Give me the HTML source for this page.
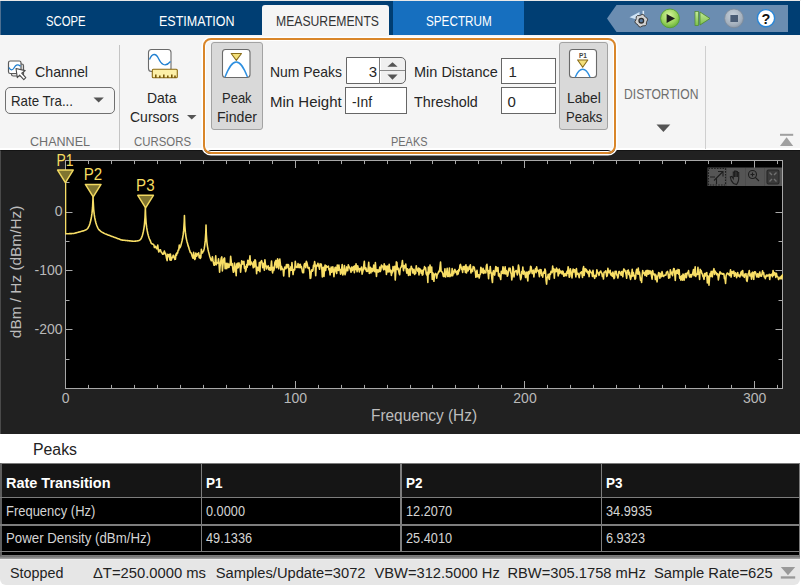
<!DOCTYPE html>
<html><head><meta charset="utf-8">
<style>
html,body{margin:0;padding:0;width:801px;height:585px;overflow:hidden;background:#ffffff;}
body{position:relative;font-family:"Liberation Sans", sans-serif;}
.a{position:absolute;box-sizing:border-box;}
.t{position:absolute;line-height:1;white-space:nowrap;transform-origin:0 0;}
svg{position:absolute;overflow:visible;}
</style></head><body>
<!-- top line -->
<div class="a" style="left:0;top:0;width:801px;height:1px;background:#e8e8e8"></div>
<!-- tab bar -->
<div class="a" style="left:0;top:1px;width:800px;height:34.7px;background:#003e73"></div>
<div class="a" style="left:0;top:1px;width:1px;height:34px;background:#4d6f91"></div>
<div class="a" style="left:262px;top:5px;width:127px;height:31px;background:#f5f5f5;border-radius:3px 3px 0 0"></div>
<div class="a" style="left:393px;top:1px;width:131px;height:34.7px;background:#166fbf"></div>
<!-- quick access -->
<svg style="left:0;top:0" width="801" height="40">
  <path d="M616.5,5 L788,5 L788,32 L616.5,32 L607,18.5 Z" fill="#6b8db1"/>
  <!-- gear icon -->
  <defs>
    <radialGradient id="gplay" cx="0.45" cy="0.35" r="0.7"><stop offset="0" stop-color="#d8f5a0"/><stop offset="0.6" stop-color="#9ad45c"/><stop offset="1" stop-color="#5ea936"/></radialGradient>
    <radialGradient id="gstop" cx="0.45" cy="0.35" r="0.7"><stop offset="0" stop-color="#c8d2dc"/><stop offset="0.7" stop-color="#a4b0bd"/><stop offset="1" stop-color="#8392a3"/></radialGradient>
    <linearGradient id="gstep" x1="0" y1="0" x2="0" y2="1"><stop offset="0" stop-color="#c4eb9a"/><stop offset="1" stop-color="#7cc04a"/></linearGradient>
  </defs>
  <path d="M629.5,17.3 L639.5,12 L639.5,20.5 Z" fill="#cfe3f5"/>
  <line x1="643.3" y1="10.8" x2="643.3" y2="15" stroke="#dbe9f6" stroke-width="1.6"/>
  <path d="M642.14,14.35 L643.75,14.79 L644.65,16.34 L645.66,17.35 L647.21,18.25 L647.65,19.86 L646.75,21.42 L646.38,22.80 L646.38,24.60 L645.20,25.78 L643.40,25.78 L642.02,26.15 L640.46,27.05 L638.85,26.61 L637.95,25.06 L636.94,24.05 L635.39,23.15 L634.95,21.54 L635.85,19.98 L636.22,18.60 L636.22,16.80 L637.40,15.62 L639.20,15.62 L640.58,15.25Z" fill="#d2d2d2" stroke="#404040" stroke-width="1" stroke-linejoin="round"/>
  <circle cx="641.3" cy="20.7" r="2.3" fill="#5a7da3" stroke="#2e2e2e" stroke-width="1.3"/>
  <!-- run -->
  <circle cx="670" cy="18.4" r="9.4" fill="url(#gplay)" stroke="#55a030" stroke-width="0.9"/>
  <path d="M666.6,14 L675,18.5 L666.6,23 Z" fill="#1e1e1e"/>
  <!-- step -->
  <rect x="695" y="11.6" width="3.6" height="14" fill="url(#gstep)" stroke="#4f8a2c" stroke-width="0.7"/>
  <path d="M700,12 L710,18.5 L700,25 Z" fill="url(#gstep)" stroke="#4f8a2c" stroke-width="0.8" stroke-linejoin="round"/>
  <!-- stop -->
  <circle cx="734" cy="18.4" r="9.4" fill="url(#gstop)" stroke="#7d8a99" stroke-width="0.8"/>
  <rect x="730.4" y="15" width="7.6" height="7" fill="#4a5d76"/>
  <!-- help -->
  <circle cx="766" cy="18.2" r="8.6" fill="#ffffff" stroke="#2a86d6" stroke-width="1.4"/>
  <text x="766" y="23.6" text-anchor="middle" font-size="14.5" font-weight="700" fill="#111">?</text>
</svg>

<!-- toolstrip -->
<div class="a" style="left:0;top:35px;width:800px;height:115px;background:#f5f5f5"></div>
<div class="a" style="left:0;top:148px;width:801px;height:1.5px;background:#ffffff"></div>
<div class="a" style="left:119px;top:45px;width:1px;height:105px;background:#c4c4c4"></div>
<div class="a" style="left:705px;top:46px;width:1px;height:103px;background:#cfcfcf"></div>
<!-- channel dropdown -->
<div class="a" style="left:4.5px;top:86.5px;width:110px;height:27px;border:1px solid #707070;border-radius:5px;background:#f5f5f5"></div>
<svg style="left:0;top:0" width="801" height="150">
  <path d="M93.5,97.5 L103.8,97.5 L98.65,102.5 Z" fill="#555"/>
  <!-- cursors dropdown arrow -->
  <path d="M187,115 L196.5,115 L191.75,119.5 Z" fill="#555"/>
  <!-- distortion arrow -->
  <path d="M656.5,124.5 L670.3,124.5 L663.4,132 Z" fill="#555"/>
  <!-- collapse icon -->
  <rect x="780" y="133.8" width="13.2" height="2" fill="#a0a0a0"/>
  <path d="M780,146 L793.2,146 L786.6,137.3 Z" fill="#a0a0a0"/>
  <!-- channel icon -->
  <g stroke-linejoin="round">
    <rect x="11.5" y="64" width="12" height="12" rx="1.8" fill="#e6e6e6" stroke="#5a5a5a" stroke-width="1.2"/>
    <rect x="8.5" y="61" width="12.5" height="12.5" rx="1.8" fill="#fff" stroke="#5a5a5a" stroke-width="1.2"/>
    <path d="M9,67.5 C10.5,70.5 12.5,70.5 14,68 C15.5,65.5 17,63.5 20.5,66.3" fill="none" stroke="#1f7fd0" stroke-width="1.3"/>
    <path d="M16,68.5 L17.3,77.6 L19.6,75.2 L23.8,79.6 L25.8,77.7 L21.7,73.2 L25.2,70.6 Z" fill="#fff" stroke="#4a4a4a" stroke-width="1.1"/>
  </g>
  <!-- data cursors icon -->
  <g>
    <rect x="148.5" y="49.5" width="22.5" height="22" rx="3" fill="#fff" stroke="#6a6a6a" stroke-width="1.1"/>
    <path d="M149.5,59.5 C152,53 156,53 158.5,58.5 S165,68 170.5,61.5" fill="none" stroke="#1f7fd0" stroke-width="1.3"/>
    <rect x="152.3" y="69.2" width="25" height="8.6" rx="1" fill="#fdf0a8" stroke="#8b6a12" stroke-width="1.1"/>
    <path d="M155.8,78 v-3.5 M159.8,78 v-2.5 M163.8,78 v-3.5 M167.8,78 v-2.5 M171.8,78 v-3.5 M175,78 v-2.5" stroke="#7a5a0a" stroke-width="1.6"/>
  </g>
</svg>
<!-- PEAKS section -->
<div class="a" style="left:210.5px;top:42px;width:52.5px;height:88px;background:#d9d9d9;border:1px solid #a3a3a3;border-radius:3px"></div>
<div class="a" style="left:558.5px;top:42px;width:49.5px;height:88px;background:#d9d9d9;border:1px solid #a3a3a3;border-radius:3px"></div>
<div class="a" style="left:346px;top:57px;width:59.5px;height:27px;background:linear-gradient(90deg,#fff 0,#fff 33.5px,#f0f0f0 33.5px);border:1px solid #666;border-radius:0 5px 5px 0"></div>
<div class="a" style="left:379px;top:57.5px;width:1.2px;height:26px;background:#7a7a7a"></div>
<div class="a" style="left:379.5px;top:70px;width:25.5px;height:1.2px;background:#8a8a8a"></div>
<div class="a" style="left:345px;top:87px;width:61.5px;height:26.5px;background:#fff;border:1px solid #666"></div>
<div class="a" style="left:501px;top:57.5px;width:55px;height:26.5px;background:#fff;border:1px solid #666"></div>
<div class="a" style="left:501px;top:87px;width:55px;height:26.5px;background:#fff;border:1px solid #666"></div>
<svg style="left:0;top:0" width="801" height="150">
  <path d="M387.4,66.7 L397.6,66.7 L392.5,62.2 Z" fill="#555"/>
  <path d="M387.4,74.6 L397.6,74.6 L392.5,79.7 Z" fill="#555"/>
  <!-- peak finder icon -->
  <rect x="222.5" y="49.5" width="27.5" height="28" rx="3" fill="#fff" stroke="#6a6a6a" stroke-width="1.1"/>
  <path d="M225,77 C229,67 232,62 236.3,62 C240.5,62 243.5,67 247.5,77" fill="none" stroke="#2d8fe0" stroke-width="1.4"/>
  <path d="M231.2,53.5 L241.5,53.5 L236.3,60.3 Z" fill="#f4e07a" stroke="#8a6d1a" stroke-width="1.1" stroke-linejoin="round"/>
  <!-- label peaks icon -->
  <rect x="569.5" y="49.5" width="27" height="28" rx="3" fill="#fff" stroke="#6a6a6a" stroke-width="1.1"/>
  <path d="M575.3,77 C577.5,72 579.8,69.3 582.7,69.3 C585.6,69.3 587.8,72 590,77" fill="none" stroke="#2d8fe0" stroke-width="1.4"/>
  <path d="M577.6,60 L587.8,60 L582.7,67.3 Z" fill="#f4e07a" stroke="#8a6d1a" stroke-width="1.1" stroke-linejoin="round"/>
  <text x="583" y="58" text-anchor="middle" font-size="6.5" font-weight="700" fill="#444">P1</text>
</svg>

<!-- figure -->
<div class="a" style="left:0;top:149.5px;width:800px;height:285px;background:#212121;border-top:1.5px solid #141414;border-left:1px solid #4a4a4a"></div>
<div class="a" style="left:65px;top:160px;width:718px;height:229px;background:#000"></div>
<svg style="left:0;top:0" width="801" height="440">
  <defs><clipPath id="ax"><rect x="65" y="160" width="718" height="229"/></clipPath></defs>
  <path d="M65.5,388.5v-7.5M65.5,160.5v7.5M88.5,388.5v-3.6M88.5,160.5v3.6M111.5,388.5v-3.6M111.5,160.5v3.6M134.5,388.5v-3.6M134.5,160.5v3.6M157.5,388.5v-3.6M157.5,160.5v3.6M180.5,388.5v-3.6M180.5,160.5v3.6M203.5,388.5v-3.6M203.5,160.5v3.6M226.5,388.5v-3.6M226.5,160.5v3.6M249.5,388.5v-3.6M249.5,160.5v3.6M272.5,388.5v-3.6M272.5,160.5v3.6M295.5,388.5v-7.5M295.5,160.5v7.5M318.5,388.5v-3.6M318.5,160.5v3.6M341.5,388.5v-3.6M341.5,160.5v3.6M364.5,388.5v-3.6M364.5,160.5v3.6M387.5,388.5v-3.6M387.5,160.5v3.6M410.5,388.5v-3.6M410.5,160.5v3.6M432.5,388.5v-3.6M432.5,160.5v3.6M455.5,388.5v-3.6M455.5,160.5v3.6M478.5,388.5v-3.6M478.5,160.5v3.6M501.5,388.5v-3.6M501.5,160.5v3.6M524.5,388.5v-7.5M524.5,160.5v7.5M547.5,388.5v-3.6M547.5,160.5v3.6M570.5,388.5v-3.6M570.5,160.5v3.6M593.5,388.5v-3.6M593.5,160.5v3.6M616.5,388.5v-3.6M616.5,160.5v3.6M639.5,388.5v-3.6M639.5,160.5v3.6M662.5,388.5v-3.6M662.5,160.5v3.6M685.5,388.5v-3.6M685.5,160.5v3.6M708.5,388.5v-3.6M708.5,160.5v3.6M731.5,388.5v-3.6M731.5,160.5v3.6M754.5,388.5v-7.5M754.5,160.5v7.5M777.5,388.5v-3.6M777.5,160.5v3.6M65.5,388.5h7M782.5,388.5h-7M65.5,359.5h4M782.5,359.5h-4M65.5,329.5h7M782.5,329.5h-7M65.5,300.5h4M782.5,300.5h-4M65.5,270.5h7M782.5,270.5h-7M65.5,241.5h4M782.5,241.5h-4M65.5,212.5h7M782.5,212.5h-7M65.5,182.5h4M782.5,182.5h-4" stroke="#a8a8a8" stroke-width="1" fill="none"/>
  <rect x="65.5" y="160.5" width="717" height="228" fill="none" stroke="#a8a8a8" stroke-width="1"/>
  <g font-size="14" fill="#b9b9b9"><text x='62.6' y='216.0' text-anchor='end'>0</text>
<text x='62.6' y='274.9' text-anchor='end'>-100</text>
<text x='62.6' y='333.7' text-anchor='end'>-200</text>
<text x='65.7' y='402.8' text-anchor='middle'>0</text>
<text x='295.4' y='402.8' text-anchor='middle'>100</text>
<text x='525.0' y='402.8' text-anchor='middle'>200</text>
<text x='754.7' y='402.8' text-anchor='middle'>300</text></g>
  <text transform="translate(21,271.9) rotate(-90)" text-anchor="middle" font-size="15.4" fill="#bdbdbd">dBm / Hz (dBm/Hz)</text>
  <g clip-path="url(#ax)"><path d="M65.50,183.09 L65.50,233.80 L66.05,233.78 L66.60,233.76 L67.16,233.74 L67.71,233.72 L68.26,233.70 L68.81,233.68 L69.37,233.66 L69.92,233.64 L70.47,233.62 L71.02,233.60 L71.58,233.58 L72.13,233.56 L72.68,233.54 L73.23,233.52 L73.79,233.48 L74.34,233.32 L74.89,233.17 L75.44,233.02 L75.99,232.87 L76.55,232.72 L77.10,232.56 L77.65,232.41 L78.20,232.26 L78.76,232.11 L79.31,231.96 L79.86,231.80 L80.41,231.65 L80.97,231.50 L81.52,231.35 L82.07,231.19 L82.62,231.04 L83.18,230.88 L83.73,230.71 L84.28,230.54 L84.83,230.34 L85.38,230.09 L85.94,229.80 L86.49,229.46 L87.04,229.02 L87.59,228.45 L88.15,227.69 L88.70,226.71 L89.25,225.49 L89.80,223.97 L90.36,222.09 L90.91,219.81 L91.46,216.97 L92.01,213.20 L92.57,207.42 L93.04,197.05 L93.12,199.78 L93.67,209.48 L94.22,214.46 L94.77,217.89 L95.33,220.54 L95.88,222.71 L96.43,224.52 L96.98,226.01 L97.54,227.28 L98.09,228.34 L98.64,229.20 L99.19,229.90 L99.75,230.47 L100.30,230.95 L100.85,231.37 L101.40,231.74 L101.95,232.09 L102.51,232.41 L103.06,232.73 L103.61,233.04 L104.16,233.34 L104.72,233.64 L105.27,233.90 L105.82,234.11 L106.37,234.31 L106.93,234.52 L107.48,234.73 L108.03,234.93 L108.58,235.14 L109.14,235.34 L109.69,235.55 L110.24,235.76 L110.79,235.96 L111.34,236.17 L111.90,236.38 L112.45,236.58 L113.00,236.79 L113.55,236.99 L114.11,237.20 L114.66,237.41 L115.21,237.61 L115.76,237.82 L116.32,238.03 L116.87,238.23 L117.42,238.44 L117.97,238.65 L118.53,238.85 L119.08,239.06 L119.63,239.26 L120.18,239.47 L120.73,239.68 L121.29,239.88 L121.84,240.03 L122.39,240.08 L122.94,240.14 L123.50,240.20 L124.05,240.26 L124.60,240.32 L125.15,240.38 L125.71,240.43 L126.26,240.49 L126.81,240.55 L127.36,240.61 L127.92,240.67 L128.47,240.73 L129.02,240.78 L129.57,240.84 L130.12,240.90 L130.68,240.96 L131.23,241.02 L131.78,241.08 L132.33,241.13 L132.89,241.19 L133.44,241.25 L133.99,241.29 L134.54,241.23 L135.10,241.16 L135.65,241.10 L136.20,241.03 L136.75,240.95 L137.31,240.87 L137.86,240.77 L138.41,240.64 L138.96,240.47 L139.51,240.21 L140.07,239.83 L140.62,239.26 L141.17,238.45 L141.72,237.35 L142.28,235.82 L142.83,233.86 L143.38,231.44 L143.93,228.36 L144.49,224.12 L145.04,217.04 L145.37,207.92 L145.59,214.84 L146.14,223.06 L146.70,227.65 L147.25,230.92 L147.80,233.49 L148.35,235.63 L148.90,237.48 L149.46,239.00 L150.01,240.08 L150.56,241.40 L151.11,242.94 L151.67,243.74 L152.22,243.73 L152.77,244.22 L153.32,244.18 L153.88,244.90 L154.43,247.48 L154.98,246.85 L155.53,246.32 L156.09,247.72 L156.64,248.78 L157.19,248.06 L157.74,245.05 L158.29,250.09 L158.85,252.05 L159.40,250.77 L159.95,249.72 L160.50,249.83 L161.06,252.10 L161.61,252.26 L162.16,253.27 L162.71,254.30 L163.27,254.22 L163.82,252.67 L164.37,251.03 L164.92,253.76 L165.47,253.04 L166.03,255.71 L166.58,258.50 L167.13,260.60 L167.68,254.25 L168.24,256.70 L168.79,255.59 L169.34,254.45 L169.89,260.01 L170.45,254.16 L171.00,260.31 L171.55,259.23 L172.10,257.22 L172.66,257.39 L173.21,255.29 L173.76,255.51 L174.31,257.90 L174.86,259.37 L175.42,259.14 L175.97,253.99 L176.52,255.21 L177.07,252.64 L177.63,253.04 L178.18,249.97 L178.73,250.06 L179.28,245.09 L179.84,247.91 L180.39,246.96 L180.94,245.19 L181.49,243.13 L182.05,240.90 L182.60,238.28 L183.15,234.92 L183.70,230.14 L184.25,221.25 L184.43,215.53 L184.81,225.53 L185.36,232.19 L185.91,236.30 L186.46,239.31 L187.02,241.68 L187.57,243.55 L188.12,245.82 L188.67,247.15 L189.23,249.22 L189.78,250.78 L190.33,252.50 L190.88,252.51 L191.44,253.72 L191.99,255.62 L192.54,257.18 L193.09,258.29 L193.64,252.33 L194.20,256.44 L194.75,259.51 L195.30,258.65 L195.85,253.05 L196.41,256.24 L196.96,255.84 L197.51,253.82 L198.06,253.99 L198.62,252.80 L199.17,257.76 L199.72,255.51 L200.27,258.42 L200.83,257.41 L201.38,249.41 L201.93,252.86 L202.48,252.99 L203.03,251.41 L203.59,251.09 L204.14,248.91 L204.69,245.56 L205.24,240.89 L205.80,232.34 L206.02,224.95 L206.35,234.78 L206.90,242.05 L207.45,246.36 L208.01,249.47 L208.56,251.90 L209.11,253.91 L209.66,256.14 L210.22,257.75 L210.77,259.37 L211.32,260.69 L211.87,260.53 L212.42,256.69 L212.98,260.38 L213.53,262.98 L214.08,265.25 L214.63,265.12 L215.19,261.15 L215.74,255.82 L216.29,264.82 L216.84,262.74 L217.40,262.74 L217.95,263.13 L218.50,258.77 L219.05,263.61 L219.61,272.19 L220.16,265.53 L220.71,261.54 L221.26,258.07 L221.81,256.88 L222.37,270.89 L222.92,265.30 L223.47,259.94 L224.02,258.56 L224.58,257.96 L225.13,268.79 L225.68,268.08 L226.23,263.39 L226.79,268.72 L227.34,265.14 L227.89,263.39 L228.44,267.43 L228.99,267.43 L229.55,263.94 L230.10,265.23 L230.65,256.23 L231.20,261.39 L231.76,265.42 L232.31,263.77 L232.86,269.36 L233.41,272.27 L233.97,271.67 L234.52,263.17 L235.07,266.71 L235.62,269.54 L236.18,275.79 L236.73,264.21 L237.28,263.29 L237.83,267.86 L238.38,267.48 L238.94,262.86 L239.49,264.86 L240.04,265.01 L240.59,272.10 L241.15,266.78 L241.70,260.82 L242.25,263.00 L242.80,264.06 L243.36,261.58 L243.91,261.42 L244.46,268.08 L245.01,266.51 L245.57,271.58 L246.12,269.87 L246.67,264.50 L247.22,267.30 L247.77,260.25 L248.33,262.50 L248.88,264.90 L249.43,260.62 L249.98,255.77 L250.54,264.94 L251.09,262.14 L251.64,262.29 L252.19,263.90 L252.75,264.61 L253.30,267.80 L253.85,261.59 L254.40,267.00 L254.96,259.75 L255.51,260.63 L256.06,266.17 L256.61,273.75 L257.16,267.41 L257.72,267.25 L258.27,270.45 L258.82,268.95 L259.37,262.48 L259.93,271.73 L260.48,261.98 L261.03,261.46 L261.58,260.71 L262.14,262.79 L262.69,267.64 L263.24,266.31 L263.79,263.39 L264.35,270.09 L264.90,259.70 L265.45,265.09 L266.00,265.51 L266.55,268.97 L267.11,266.78 L267.66,266.30 L268.21,265.79 L268.76,269.37 L269.32,269.99 L269.87,267.46 L270.42,270.18 L270.97,266.66 L271.53,261.05 L272.08,269.79 L272.63,272.86 L273.18,267.22 L273.74,270.42 L274.29,268.48 L274.84,262.78 L275.39,261.31 L275.94,260.39 L276.50,267.73 L277.05,266.54 L277.60,258.90 L278.15,265.63 L278.71,268.75 L279.26,260.42 L279.81,259.05 L280.36,263.86 L280.92,269.89 L281.47,266.50 L282.02,268.38 L282.57,269.42 L283.13,269.49 L283.68,276.05 L284.23,269.42 L284.78,267.10 L285.33,268.63 L285.89,268.68 L286.44,264.62 L286.99,267.76 L287.54,264.50 L288.10,264.55 L288.65,265.33 L289.20,276.71 L289.75,268.99 L290.31,270.45 L290.86,266.83 L291.41,270.21 L291.96,262.48 L292.52,268.33 L293.07,274.57 L293.62,270.37 L294.17,269.34 L294.72,269.79 L295.28,261.35 L295.83,266.00 L296.38,267.26 L296.93,267.53 L297.49,267.10 L298.04,263.65 L298.59,267.19 L299.14,267.71 L299.70,264.39 L300.25,264.20 L300.80,267.62 L301.35,266.51 L301.90,268.69 L302.46,272.11 L303.01,272.89 L303.56,272.62 L304.11,265.07 L304.67,263.62 L305.22,263.66 L305.77,267.62 L306.32,261.41 L306.88,262.69 L307.43,265.09 L307.98,268.10 L308.53,268.37 L309.09,267.48 L309.64,270.76 L310.19,278.42 L310.74,278.11 L311.29,271.74 L311.85,269.76 L312.40,271.20 L312.95,270.37 L313.50,265.37 L314.06,266.37 L314.61,261.52 L315.16,265.22 L315.71,275.82 L316.27,265.27 L316.82,266.00 L317.37,266.05 L317.92,263.25 L318.48,265.69 L319.03,266.76 L319.58,269.23 L320.13,263.92 L320.68,264.44 L321.24,264.10 L321.79,268.03 L322.34,276.88 L322.89,267.89 L323.45,267.33 L324.00,276.40 L324.55,268.38 L325.10,264.94 L325.66,270.53 L326.21,265.81 L326.76,266.62 L327.31,267.10 L327.87,266.92 L328.42,266.07 L328.97,270.00 L329.52,268.83 L330.07,274.91 L330.63,270.55 L331.18,267.02 L331.73,272.25 L332.28,269.52 L332.84,266.77 L333.39,270.55 L333.94,276.71 L334.49,271.15 L335.05,267.50 L335.60,267.38 L336.15,271.55 L336.70,273.45 L337.26,265.01 L337.81,268.12 L338.36,270.41 L338.91,265.13 L339.46,269.99 L340.02,269.29 L340.57,274.23 L341.12,272.86 L341.67,268.64 L342.23,264.48 L342.78,275.01 L343.33,273.42 L343.88,271.06 L344.44,265.56 L344.99,274.70 L345.54,272.87 L346.09,270.76 L346.65,266.93 L347.20,268.91 L347.75,270.64 L348.30,264.76 L348.85,266.40 L349.41,267.55 L349.96,268.40 L350.51,269.98 L351.06,272.21 L351.62,267.01 L352.17,270.70 L352.72,269.79 L353.27,266.88 L353.83,266.51 L354.38,272.65 L354.93,265.91 L355.48,269.35 L356.04,263.74 L356.59,268.47 L357.14,271.79 L357.69,265.78 L358.24,268.16 L358.80,268.81 L359.35,271.85 L359.90,268.60 L360.45,269.85 L361.01,268.88 L361.56,267.02 L362.11,274.13 L362.66,271.74 L363.22,270.09 L363.77,265.53 L364.32,261.24 L364.87,268.49 L365.42,269.62 L365.98,267.90 L366.53,271.33 L367.08,270.95 L367.63,271.30 L368.19,268.27 L368.74,262.35 L369.29,273.50 L369.84,269.62 L370.40,267.30 L370.95,272.94 L371.50,268.59 L372.05,268.53 L372.61,271.52 L373.16,270.55 L373.71,265.13 L374.26,266.42 L374.81,271.79 L375.37,262.60 L375.92,269.98 L376.47,276.44 L377.02,269.78 L377.58,271.97 L378.13,269.94 L378.68,272.00 L379.23,270.79 L379.79,267.10 L380.34,271.56 L380.89,269.67 L381.44,265.12 L382.00,266.44 L382.55,266.12 L383.10,267.95 L383.65,269.69 L384.20,263.90 L384.76,266.15 L385.31,269.64 L385.86,266.06 L386.41,274.48 L386.97,269.93 L387.52,266.04 L388.07,271.91 L388.62,271.83 L389.18,264.28 L389.73,270.03 L390.28,271.99 L390.83,270.18 L391.39,275.40 L391.94,270.94 L392.49,272.67 L393.04,266.58 L393.59,270.86 L394.15,269.25 L394.70,266.37 L395.25,280.07 L395.80,272.22 L396.36,261.89 L396.91,262.61 L397.46,269.50 L398.01,267.99 L398.57,270.50 L399.12,273.21 L399.67,274.75 L400.22,268.40 L400.78,267.61 L401.33,266.81 L401.88,264.67 L402.43,260.66 L402.98,266.30 L403.54,270.76 L404.09,265.48 L404.64,267.86 L405.19,267.66 L405.75,264.03 L406.30,270.43 L406.85,273.21 L407.40,268.70 L407.96,269.61 L408.51,275.33 L409.06,271.21 L409.61,269.10 L410.17,275.08 L410.72,269.57 L411.27,266.24 L411.82,268.41 L412.37,268.69 L412.93,273.05 L413.48,273.02 L414.03,269.34 L414.58,274.53 L415.14,272.39 L415.69,273.35 L416.24,265.70 L416.79,269.82 L417.35,269.20 L417.90,271.33 L418.45,268.06 L419.00,274.87 L419.56,268.61 L420.11,269.05 L420.66,270.67 L421.21,273.23 L421.76,270.23 L422.32,275.08 L422.87,274.69 L423.42,269.86 L423.97,269.77 L424.53,266.66 L425.08,268.39 L425.63,267.97 L426.18,273.56 L426.74,274.86 L427.29,272.42 L427.84,282.44 L428.39,266.93 L428.94,273.94 L429.50,271.53 L430.05,264.94 L430.60,272.20 L431.15,271.01 L431.71,266.96 L432.26,279.43 L432.81,272.86 L433.36,274.00 L433.92,281.32 L434.47,274.66 L435.02,274.28 L435.57,273.39 L436.13,274.27 L436.68,278.20 L437.23,274.58 L437.78,273.90 L438.33,272.46 L438.89,271.15 L439.44,271.64 L439.99,266.94 L440.54,262.08 L441.10,271.31 L441.65,271.28 L442.20,272.25 L442.75,273.42 L443.31,276.31 L443.86,276.57 L444.41,273.98 L444.96,268.69 L445.52,277.00 L446.07,274.10 L446.62,272.75 L447.17,268.29 L447.72,276.36 L448.28,276.45 L448.83,275.25 L449.38,268.10 L449.93,276.69 L450.49,275.46 L451.04,274.28 L451.59,275.76 L452.14,268.57 L452.70,275.60 L453.25,271.55 L453.80,273.58 L454.35,270.28 L454.91,269.33 L455.46,271.61 L456.01,272.55 L456.56,271.45 L457.11,274.76 L457.67,270.76 L458.22,273.96 L458.77,269.61 L459.32,270.81 L459.88,265.50 L460.43,264.45 L460.98,266.37 L461.53,269.38 L462.09,268.28 L462.64,272.46 L463.19,266.51 L463.74,267.48 L464.30,269.36 L464.85,266.33 L465.40,272.47 L465.95,264.89 L466.50,272.84 L467.06,266.79 L467.61,270.86 L468.16,270.74 L468.71,268.13 L469.27,266.35 L469.82,269.07 L470.37,264.90 L470.92,273.05 L471.48,269.24 L472.03,271.23 L472.58,271.43 L473.13,266.60 L473.69,267.08 L474.24,267.34 L474.79,270.23 L475.34,271.56 L475.89,277.30 L476.45,273.14 L477.00,270.29 L477.55,276.61 L478.10,276.14 L478.66,274.77 L479.21,278.05 L479.76,274.78 L480.31,274.16 L480.87,267.18 L481.42,269.04 L481.97,272.75 L482.52,272.61 L483.08,268.38 L483.63,273.43 L484.18,270.37 L484.73,272.72 L485.28,272.00 L485.84,272.93 L486.39,265.52 L486.94,264.24 L487.49,269.57 L488.05,272.69 L488.60,278.71 L489.15,270.47 L489.70,273.25 L490.26,266.57 L490.81,272.44 L491.36,272.83 L491.91,278.94 L492.46,282.53 L493.02,272.16 L493.57,270.63 L494.12,274.01 L494.67,275.10 L495.23,270.85 L495.78,266.55 L496.33,267.06 L496.88,271.35 L497.44,269.71 L497.99,267.48 L498.54,275.97 L499.09,273.45 L499.65,276.19 L500.20,277.36 L500.75,279.52 L501.30,271.31 L501.85,271.81 L502.41,273.37 L502.96,266.80 L503.51,269.13 L504.06,273.80 L504.62,271.71 L505.17,266.69 L505.72,273.85 L506.27,270.65 L506.83,271.89 L507.38,276.30 L507.93,274.95 L508.48,270.53 L509.04,268.09 L509.59,270.49 L510.14,268.39 L510.69,272.94 L511.24,273.36 L511.80,279.95 L512.35,275.54 L512.90,266.58 L513.45,268.86 L514.01,276.92 L514.56,272.00 L515.11,271.94 L515.66,270.85 L516.22,270.49 L516.77,271.93 L517.32,274.88 L517.87,271.92 L518.43,265.02 L518.98,267.75 L519.53,273.39 L520.08,275.96 L520.63,279.64 L521.19,277.71 L521.74,271.55 L522.29,273.43 L522.84,266.97 L523.40,274.19 L523.95,273.09 L524.50,271.27 L525.05,274.57 L525.61,277.54 L526.16,272.92 L526.71,272.12 L527.26,277.13 L527.82,280.90 L528.37,271.65 L528.92,271.40 L529.47,273.81 L530.02,272.30 L530.58,266.28 L531.13,266.80 L531.68,271.18 L532.23,273.54 L532.79,271.11 L533.34,270.09 L533.89,276.95 L534.44,271.56 L535.00,270.33 L535.55,268.63 L536.10,272.74 L536.65,266.80 L537.21,270.95 L537.76,270.21 L538.31,270.54 L538.86,272.70 L539.41,276.74 L539.97,269.59 L540.52,273.29 L541.07,269.68 L541.62,275.53 L542.18,274.59 L542.73,277.13 L543.28,272.17 L543.83,272.57 L544.39,273.26 L544.94,268.97 L545.49,270.70 L546.04,280.19 L546.60,284.07 L547.15,277.26 L547.70,277.22 L548.25,274.20 L548.80,277.95 L549.36,279.38 L549.91,273.54 L550.46,274.44 L551.01,271.40 L551.57,271.85 L552.12,272.60 L552.67,266.06 L553.22,271.11 L553.78,268.78 L554.33,278.20 L554.88,269.48 L555.43,269.63 L555.98,271.77 L556.54,268.12 L557.09,271.07 L557.64,269.69 L558.19,275.86 L558.75,273.94 L559.30,269.00 L559.85,273.27 L560.40,271.19 L560.96,271.13 L561.51,272.72 L562.06,273.95 L562.61,271.04 L563.17,271.77 L563.72,276.09 L564.27,273.68 L564.82,276.04 L565.37,274.79 L565.93,273.35 L566.48,275.64 L567.03,271.18 L567.58,273.24 L568.14,266.82 L568.69,270.60 L569.24,277.18 L569.79,276.45 L570.35,268.74 L570.90,271.48 L571.45,272.79 L572.00,277.91 L572.56,271.77 L573.11,269.01 L573.66,272.00 L574.21,269.74 L574.76,269.84 L575.32,272.54 L575.87,276.96 L576.42,268.49 L576.97,274.33 L577.53,273.54 L578.08,273.32 L578.63,275.42 L579.18,277.64 L579.74,274.41 L580.29,272.76 L580.84,272.98 L581.39,271.80 L581.95,273.60 L582.50,277.43 L583.05,268.88 L583.60,266.62 L584.15,275.37 L584.71,271.06 L585.26,268.68 L585.81,270.93 L586.36,269.41 L586.92,272.19 L587.47,271.25 L588.02,273.62 L588.57,271.72 L589.13,276.58 L589.68,270.11 L590.23,271.20 L590.78,272.03 L591.34,272.82 L591.89,272.51 L592.44,276.35 L592.99,270.33 L593.54,275.22 L594.10,276.42 L594.65,278.35 L595.20,275.34 L595.75,275.39 L596.31,276.54 L596.86,269.78 L597.41,272.10 L597.96,272.45 L598.52,274.00 L599.07,275.34 L599.62,272.57 L600.17,271.74 L600.73,270.99 L601.28,272.48 L601.83,273.23 L602.38,276.54 L602.93,274.44 L603.49,279.05 L604.04,272.21 L604.59,272.11 L605.14,271.85 L605.70,270.74 L606.25,273.29 L606.80,276.49 L607.35,275.17 L607.91,268.40 L608.46,272.20 L609.01,272.73 L609.56,272.43 L610.12,270.20 L610.67,274.83 L611.22,275.16 L611.77,273.39 L612.32,276.41 L612.88,272.04 L613.43,274.27 L613.98,278.59 L614.53,277.83 L615.09,271.20 L615.64,273.50 L616.19,271.21 L616.74,274.88 L617.30,275.09 L617.85,278.01 L618.40,275.71 L618.95,271.44 L619.51,271.58 L620.06,272.95 L620.61,273.66 L621.16,275.18 L621.71,271.63 L622.27,273.01 L622.82,276.80 L623.37,270.76 L623.92,268.94 L624.48,271.01 L625.03,270.34 L625.58,272.47 L626.13,274.56 L626.69,278.31 L627.24,270.60 L627.79,271.52 L628.34,270.08 L628.89,274.76 L629.45,272.41 L630.00,277.02 L630.55,279.35 L631.10,277.15 L631.66,274.45 L632.21,269.40 L632.76,276.12 L633.31,272.45 L633.87,275.03 L634.42,275.79 L634.97,279.23 L635.52,278.51 L636.08,272.16 L636.63,269.31 L637.18,270.88 L637.73,274.02 L638.28,268.00 L638.84,274.09 L639.39,271.95 L639.94,275.62 L640.49,280.09 L641.05,278.50 L641.60,282.34 L642.15,275.51 L642.70,270.52 L643.26,273.36 L643.81,272.74 L644.36,273.00 L644.91,275.42 L645.47,271.28 L646.02,270.94 L646.57,276.13 L647.12,270.33 L647.67,272.20 L648.23,274.17 L648.78,270.50 L649.33,271.26 L649.88,273.71 L650.44,271.03 L650.99,271.82 L651.54,276.19 L652.09,279.16 L652.65,270.64 L653.20,273.02 L653.75,274.41 L654.30,275.10 L654.86,273.99 L655.41,279.55 L655.96,275.09 L656.51,277.82 L657.06,281.83 L657.62,276.63 L658.17,275.40 L658.72,272.50 L659.27,273.25 L659.83,278.17 L660.38,276.14 L660.93,273.28 L661.48,276.73 L662.04,271.61 L662.59,274.25 L663.14,276.32 L663.69,276.53 L664.25,275.26 L664.80,275.22 L665.35,274.72 L665.90,275.13 L666.45,272.33 L667.01,271.89 L667.56,271.43 L668.11,273.61 L668.66,278.24 L669.22,274.80 L669.77,277.80 L670.32,269.85 L670.87,272.15 L671.43,273.84 L671.98,272.29 L672.53,275.62 L673.08,271.59 L673.64,268.57 L674.19,268.81 L674.74,273.76 L675.29,280.40 L675.84,271.39 L676.40,270.35 L676.95,273.32 L677.50,273.22 L678.05,269.42 L678.61,274.26 L679.16,269.91 L679.71,278.18 L680.26,276.50 L680.82,280.08 L681.37,276.75 L681.92,275.58 L682.47,280.24 L683.03,274.15 L683.58,275.47 L684.13,280.17 L684.68,277.25 L685.23,273.68 L685.79,273.56 L686.34,277.63 L686.89,274.56 L687.44,272.57 L688.00,273.32 L688.55,270.60 L689.10,275.40 L689.65,276.98 L690.21,276.96 L690.76,274.53 L691.31,276.96 L691.86,274.95 L692.41,274.22 L692.97,272.09 L693.52,269.44 L694.07,275.62 L694.62,272.14 L695.18,266.84 L695.73,276.44 L696.28,274.26 L696.83,273.79 L697.39,274.50 L697.94,267.27 L698.49,274.10 L699.04,272.47 L699.60,279.51 L700.15,269.26 L700.70,270.32 L701.25,270.85 L701.80,273.27 L702.36,274.00 L702.91,276.27 L703.46,277.12 L704.01,279.31 L704.57,273.51 L705.12,276.17 L705.67,273.87 L706.22,272.94 L706.78,272.54 L707.33,283.06 L707.88,275.81 L708.43,276.75 L708.99,285.24 L709.54,277.49 L710.09,273.63 L710.64,276.50 L711.19,271.25 L711.75,272.51 L712.30,276.83 L712.85,271.53 L713.40,270.75 L713.96,268.67 L714.51,274.35 L715.06,271.16 L715.61,272.55 L716.17,272.65 L716.72,274.68 L717.27,273.62 L717.82,274.12 L718.38,279.86 L718.93,276.87 L719.48,273.99 L720.03,271.81 L720.58,273.65 L721.14,273.44 L721.69,273.14 L722.24,274.20 L722.79,274.23 L723.35,273.63 L723.90,273.94 L724.45,278.70 L725.00,278.74 L725.56,283.38 L726.11,275.67 L726.66,274.12 L727.21,273.06 L727.77,273.29 L728.32,274.10 L728.87,273.90 L729.42,275.61 L729.97,273.55 L730.53,269.89 L731.08,277.07 L731.63,273.58 L732.18,271.56 L732.74,273.18 L733.29,273.25 L733.84,271.19 L734.39,276.30 L734.95,273.88 L735.50,272.79 L736.05,274.81 L736.60,277.69 L737.16,274.53 L737.71,272.61 L738.26,275.91 L738.81,274.89 L739.36,276.23 L739.92,276.90 L740.47,274.43 L741.02,272.27 L741.57,271.42 L742.13,275.69 L742.68,270.63 L743.23,275.90 L743.78,275.27 L744.34,277.33 L744.89,274.07 L745.44,274.83 L745.99,273.63 L746.55,280.28 L747.10,281.47 L747.65,277.96 L748.20,273.72 L748.75,273.12 L749.31,270.54 L749.86,275.89 L750.41,275.37 L750.96,274.02 L751.52,279.18 L752.07,272.83 L752.62,272.22 L753.17,275.28 L753.73,279.32 L754.28,272.07 L754.83,271.69 L755.38,271.93 L755.93,273.94 L756.49,275.91 L757.04,277.08 L757.59,273.84 L758.14,273.99 L758.70,277.19 L759.25,274.96 L759.80,271.96 L760.35,275.98 L760.91,275.41 L761.46,276.20 L762.01,273.83 L762.56,270.86 L763.12,273.85 L763.67,272.80 L764.22,276.92 L764.77,276.18 L765.32,278.61 L765.88,276.81 L766.43,274.99 L766.98,276.15 L767.53,275.20 L768.09,275.90 L768.64,275.63 L769.19,274.24 L769.74,279.53 L770.30,274.97 L770.85,274.49 L771.40,275.47 L771.95,274.01 L772.51,276.72 L773.06,270.63 L773.61,275.15 L774.16,274.83 L774.71,272.62 L775.27,274.11 L775.82,277.35 L776.37,273.22 L776.92,276.03 L777.48,276.54 L778.03,277.19 L778.58,279.54 L779.13,278.56 L779.69,277.98 L780.24,276.97 L780.79,278.75 L781.34,276.15 L781.90,278.62 L782.45,274.82 L783.00,274.44" fill="none" stroke="#f8de66" stroke-width="1.6" stroke-linejoin="round"/></g>
  <path d='M57.6,170.1 L73.2,170.1 L65.4,182.6Z' fill='#807530' stroke='#f0d860' stroke-width='1.5' stroke-linejoin='round'/><text x='65.1' y='165.8' text-anchor='middle' fill='#f5dc60' font-size='16' textLength='17' lengthAdjust='spacingAndGlyphs'>P1</text><path d='M85.4,184.4 L101.0,184.4 L93.2,196.9Z' fill='#807530' stroke='#f0d860' stroke-width='1.5' stroke-linejoin='round'/><text x='92.9' y='180.1' text-anchor='middle' fill='#f5dc60' font-size='16' textLength='18.5' lengthAdjust='spacingAndGlyphs'>P2</text><path d='M137.8,195.3 L153.4,195.3 L145.6,207.8Z' fill='#807530' stroke='#f0d860' stroke-width='1.5' stroke-linejoin='round'/><text x='145.3' y='191.0' text-anchor='middle' fill='#f5dc60' font-size='16' textLength='18.5' lengthAdjust='spacingAndGlyphs'>P3</text>
  <!-- axes toolbar -->
  <rect x="707.5" y="167.5" width="74.5" height="18.5" fill="#555555"/>
  <path d="M726.5,168v18 M745.5,168v18 M764.5,168v18" stroke="#4c4c4c" stroke-width="1"/>
  <g stroke="#1e1e1e" fill="none" stroke-width="1.1">
    <rect x="708.5" y="168.5" width="17" height="16.5" stroke-dasharray="1.6,1.2"/>
    <path d="M710,177 h5 M716.5,184 v-6 M714,180.5 L722.5,172 M718,171.5 h5 v5"/>
    <path d="M733.5,183.5 c-1.5,-1.5 -3,-4 -3.2,-6.5 l1.5,-0.5 l1.5,2 v-6.5 h1.3 v5 v-6 h1.4 v6 v-5.5 h1.4 v5.5 v-4.5 h1.3 v6.5 c0,2 -1,4 -2,5.5 z"/>
    <circle cx="752.5" cy="174.5" r="4"/><path d="M755.3,177.3 L759,181 M750.5,174.5 h4 M752.5,172.5 v4"/>
    <rect x="767" y="170" width="12" height="14" rx="1.5" fill="#3a3a3a" stroke="#262626"/>
    <path d="M769.5,172.5 l2.5,2.5 M776.5,172.5 l-2.5,2.5 M769.5,181.5 l2.5,-2.5 M776.5,181.5 l-2.5,-2.5" stroke="#707070" stroke-width="1.4"/>
  </g>
</svg>

<!-- orange box overlay -->
<div class="a" style="z-index:5;left:203px;top:37.9px;width:412.8px;height:115.9px;border:2.4px solid #d9862a;border-radius:8px;box-shadow:0 0 0 1.6px #ffffff, inset 0 0 0 1px #ffffff"></div>
<!-- peaks title band -->
<div class="a" style="left:0;top:434px;width:801px;height:29px;background:#fff"></div>
<!-- table -->
<div class="a" style="left:0;top:463px;width:800px;height:93px;background:#000;border:1px solid #7a7a7a;border-left:2px solid #5e5e5e"></div>
<div class="a" style="left:2px;top:464px;width:797px;height:33px;background:#151515"></div>
<div class="a" style="left:0;top:496.5px;width:800px;height:1.5px;background:#7d7d7d"></div>
<div class="a" style="left:0;top:524px;width:800px;height:1.5px;background:#7d7d7d"></div>
<div class="a" style="left:0;top:550.5px;width:800px;height:1.5px;background:#7d7d7d"></div>
<div class="a" style="left:200.5px;top:463px;width:1.5px;height:89px;background:#7d7d7d"></div>
<div class="a" style="left:400px;top:463px;width:1.5px;height:89px;background:#7d7d7d"></div>
<div class="a" style="left:600.5px;top:463px;width:1.5px;height:89px;background:#7d7d7d"></div>
<div class="a" style="left:0;top:556px;width:800px;height:3px;background:linear-gradient(#6a6a6a,#a8a8a8)"></div>
<div class="a" style="left:0;top:559px;width:800px;height:1px;background:#f0f0f0"></div>
<!-- status bar -->
<div class="a" style="left:0;top:560px;width:800px;height:25px;background:#e6e6e6;border-radius:0 0 6px 6px"></div>
<svg style="left:0;top:0" width="801" height="585">
  <path d="M780.8,567.1 L795.2,567.1 L788,575.3 Z" fill="#999999"/>
  <rect x="780.8" y="576.3" width="14.4" height="2.3" fill="#999999"/>
</svg>

<span class=t style='left:45.90px;top:13px;font-size:15px;color:#ffffff;font-weight:400;transform:scaleX(0.7541);'>SCOPE</span>
<span class=t style='left:159.00px;top:13px;font-size:15px;color:#ffffff;font-weight:400;transform:scaleX(0.8348);'>ESTIMATION</span>
<span class=t style='left:276.30px;top:13px;font-size:15px;color:#333333;font-weight:400;transform:scaleX(0.8130);'>MEASUREMENTS</span>
<span class=t style='left:426.00px;top:13px;font-size:15px;color:#ffffff;font-weight:400;transform:scaleX(0.7805);'>SPECTRUM</span>
<span class=t style='left:35.00px;top:64px;font-size:15px;color:#262626;font-weight:400;transform:scaleX(0.9483);'>Channel</span>
<span class=t style='left:10.70px;top:93px;font-size:15px;color:#262626;font-weight:400;transform:scaleX(0.8853);'>Rate Tra...</span>
<span class=t style='left:30.00px;top:135px;font-size:13.5px;color:#6e6e6e;font-weight:400;transform:scaleX(0.9300);'>CHANNEL</span>
<span class=t style='left:147.00px;top:90px;font-size:15px;color:#262626;font-weight:400;transform:scaleX(0.9310);'>Data</span>
<span class=t style='left:130.00px;top:109px;font-size:15px;color:#262626;font-weight:400;transform:scaleX(0.9331);'>Cursors</span>
<span class=t style='left:133.60px;top:135px;font-size:13.5px;color:#6e6e6e;font-weight:400;transform:scaleX(0.8442);'>CURSORS</span>
<span class=t style='left:222.00px;top:90px;font-size:15px;color:#262626;font-weight:400;transform:scaleX(0.8654);'>Peak</span>
<span class=t style='left:217.00px;top:109px;font-size:15px;color:#262626;font-weight:400;transform:scaleX(0.9405);'>Finder</span>
<span class=t style='left:270.00px;top:64px;font-size:15px;color:#262626;font-weight:400;transform:scaleX(0.9287);'>Num Peaks</span>
<span class=t style='left:270.00px;top:94px;font-size:15px;color:#262626;font-weight:400;'>Min Height</span>
<span class=t style='left:413.70px;top:64px;font-size:15px;color:#262626;font-weight:400;transform:scaleX(0.9665);'>Min Distance</span>
<span class=t style='left:413.70px;top:94px;font-size:15px;color:#262626;font-weight:400;transform:scaleX(0.9565);'>Threshold</span>
<span class=t style='left:390.90px;top:135px;font-size:13.5px;color:#6e6e6e;font-weight:400;transform:scaleX(0.8105);'>PEAKS</span>
<span class=t style='left:566.70px;top:90px;font-size:15px;color:#262626;font-weight:400;transform:scaleX(0.9209);'>Label</span>
<span class=t style='left:565.60px;top:109px;font-size:15px;color:#262626;font-weight:400;transform:scaleX(0.8728);'>Peaks</span>
<span class=t style='left:624.30px;top:86px;font-size:15px;color:#6e6e6e;font-weight:400;transform:scaleX(0.8090);'>DISTORTION</span>
<span class=t style='left:368.66px;top:64px;font-size:15px;color:#262626;font-weight:400;'>3</span>
<span class=t style='left:352.40px;top:94px;font-size:15px;color:#262626;font-weight:400;transform:scaleX(0.9222);'>-Inf</span>
<span class=t style='left:508.50px;top:64px;font-size:15px;color:#262626;font-weight:400;'>1</span>
<span class=t style='left:507.50px;top:94px;font-size:15px;color:#262626;font-weight:400;'>0</span>
<span class=t style='left:371.20px;top:408px;font-size:16px;color:#bdbdbd;font-weight:400;transform:scaleX(0.9615);'>Frequency (Hz)</span>
<span class=t style='left:33.00px;top:442px;font-size:16px;color:#222;font-weight:400;transform:scaleX(0.9895);'>Peaks</span>
<span class=t style='left:5.50px;top:475px;font-size:15px;color:#ffffff;font-weight:700;transform:scaleX(0.9644);'>Rate Transition</span>
<span class=t style='left:205.50px;top:475px;font-size:15px;color:#ffffff;font-weight:700;transform:scaleX(0.8987);'>P1</span>
<span class=t style='left:405.50px;top:475px;font-size:15px;color:#ffffff;font-weight:700;transform:scaleX(0.8987);'>P2</span>
<span class=t style='left:605.50px;top:475px;font-size:15px;color:#ffffff;font-weight:700;transform:scaleX(0.8987);'>P3</span>
<span class=t style='left:5.50px;top:504px;font-size:14px;color:#d4d4d4;font-weight:400;transform:scaleX(0.9257);'>Frequency (Hz)</span>
<span class=t style='left:5.50px;top:531px;font-size:14px;color:#d4d4d4;font-weight:400;transform:scaleX(0.9461);'>Power Density (dBm/Hz)</span>
<span class=t style='left:205.50px;top:504px;font-size:14px;color:#d4d4d4;font-weight:400;transform:scaleX(0.9100);'>0.0000</span>
<span class=t style='left:205.50px;top:531px;font-size:14px;color:#d4d4d4;font-weight:400;transform:scaleX(0.9100);'>49.1336</span>
<span class=t style='left:405.50px;top:504px;font-size:14px;color:#d4d4d4;font-weight:400;transform:scaleX(0.9100);'>12.2070</span>
<span class=t style='left:405.50px;top:531px;font-size:14px;color:#d4d4d4;font-weight:400;transform:scaleX(0.9100);'>25.4010</span>
<span class=t style='left:605.50px;top:504px;font-size:14px;color:#d4d4d4;font-weight:400;transform:scaleX(0.9100);'>34.9935</span>
<span class=t style='left:605.50px;top:531px;font-size:14px;color:#d4d4d4;font-weight:400;transform:scaleX(0.9100);'>6.9323</span>
<span class=t style='left:9.60px;top:566px;font-size:14.7px;color:#222;font-weight:400;transform:scaleX(0.9756);'>Stopped</span>
<span class=t style='left:93.40px;top:566px;font-size:14.7px;color:#222;font-weight:400;transform:scaleX(1.0064);'>ΔT=250.0000 ms</span>
<span class=t style='left:215.70px;top:566px;font-size:14.7px;color:#222;font-weight:400;'>Samples/Update=3072</span>
<span class=t style='left:374.50px;top:566px;font-size:14.7px;color:#222;font-weight:400;'>VBW=312.5000 Hz</span>
<span class=t style='left:507.40px;top:566px;font-size:14.7px;color:#222;font-weight:400;'>RBW=305.1758 mHz</span>
<span class=t style='left:653.70px;top:566px;font-size:14.7px;color:#222;font-weight:400;transform:scaleX(1.0068);'>Sample Rate=625</span>
</body></html>
